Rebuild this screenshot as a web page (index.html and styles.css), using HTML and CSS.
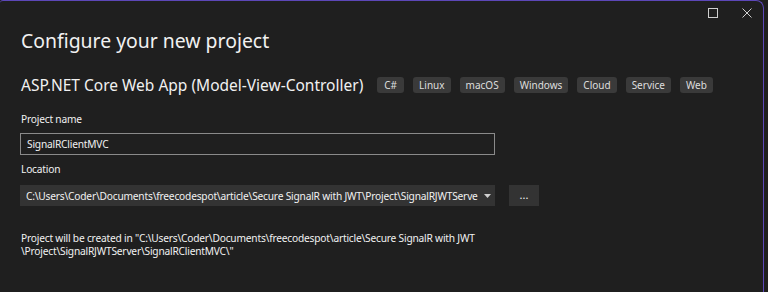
FILE: index.html
```html
<!DOCTYPE html>
<html lang="en">

<head>
    <meta charset="UTF-8">
    <title>Configure your new project</title>
    <link rel="stylesheet" href="styles.css">
</head>

<body>
    <div class="window">
        <div class="title-bar">
            <span class="win-btn">
                <svg width="10" height="10" viewBox="0 0 10 10"><rect x="0.5" y="0.5" width="9" height="9" fill="none" stroke="#cfcfcf" stroke-width="1"/></svg>
            </span>
            <span class="win-btn">
                <svg width="10" height="10" viewBox="0 0 10 10"><path d="M0.5 0.5L9.5 9.5M9.5 0.5L0.5 9.5" stroke="#cfcfcf" stroke-width="1"/></svg>
            </span>
        </div>
        <div class="content">
            <h1 class="page-title">Configure your new project</h1>
            <div class="template-row">
                <h2 class="template-name">ASP.NET Core Web App (Model-View-Controller)</h2>
                <ul class="tags">
                    <li>C#</li>
                    <li>Linux</li>
                    <li>macOS</li>
                    <li>Windows</li>
                    <li>Cloud</li>
                    <li>Service</li>
                    <li>Web</li>
                </ul>
            </div>
            <label class="field-label name-label">Project name</label>
            <div class="text-input">SignalRClientMVC</div>
            <label class="field-label location-label">Location</label>
            <div class="location-row">
                <div class="combo">
                    <span class="combo-text">C:\Users\Coder\Documents\freecodespot\article\Secure SignalR with JWT\Project\SignalRJWTServer</span>
                    <svg class="combo-arrow" width="7" height="4" viewBox="0 0 7 4"><path d="M0 0H7L3.5 4Z" fill="#cfcfcf"/></svg>
                </div>
                <div class="browse-btn">...</div>
            </div>
            <p class="note">Project will be created in "C:\Users\Coder\Documents\freecodespot\article\Secure SignalR with JWT<br>\Project\SignalRJWTServer\SignalRClientMVC\"</p>
        </div>
    </div>
</body>

</html>
```

FILE: styles.css
```css
* {
    margin: 0;
    padding: 0;
    box-sizing: border-box;
}

body {
    background-color: #1f1f1f;
    font-family: "Noto Sans", "Open Sans", sans-serif;
    color: #f1f1f1;
    width: 768px;
    height: 292px;
    overflow: hidden;
}

.window {
    width: 764px;
    height: 300px;
    border-top: 1px solid #5c47b8;
    border-right: 1px solid #5c47b8;
    border-top-right-radius: 8px;
    border-top-left-radius: 3px;
}

.title-bar {
    display: flex;
    justify-content: flex-end;
    gap: 24px;
    padding: 7px 11px 0 0;
    height: 25px;
}

.win-btn {
    display: flex;
    width: 10px;
    height: 10px;
}

.content {
    padding-left: 20px;
}

.page-title {
    font-size: 19.4px;
    font-weight: normal;
    line-height: 29px;
    padding-left: 1px;
}

.template-row {
    display: flex;
    align-items: center;
    margin-top: 19px;
}

.template-name {
    font-size: 15.5px;
    font-weight: normal;
    line-height: 22px;
    padding-left: 1px;
}

.tags {
    display: flex;
    list-style: none;
    gap: 9px;
    margin-left: 14px;
}

.tags li {
    background-color: #3a3a3a;
    border-radius: 3px;
    font-size: 10px;
    line-height: 16px;
    padding: 0 6px;
    color: #dedede;
}

.tags li:first-child {
    padding: 0 7px;
}

.field-label {
    display: block;
    font-size: 10.2px;
    letter-spacing: -0.2px;
    line-height: 14px;
    padding-left: 1px;
}

.name-label {
    margin-top: 16px;
}

.location-label {
    margin-top: 7px;
}

.text-input {
    width: 475px;
    height: 22px;
    border: 1px solid #8a8a8a;
    font-size: 10.2px;
    letter-spacing: -0.2px;
    line-height: 20px;
    padding-left: 6px;
    margin-top: 7px;
}

.location-row {
    display: flex;
    gap: 14px;
    margin-top: 9px;
}

.combo {
    width: 475px;
    height: 21px;
    background-color: #333333;
    display: flex;
    align-items: center;
    padding: 0 4px 0 6px;
}

.combo-text {
    flex: 1;
    font-size: 10.2px;
    letter-spacing: -0.2px;
    white-space: nowrap;
    overflow: hidden;
}

.combo-arrow {
    margin-left: 6px;
}

.browse-btn {
    width: 30px;
    height: 21px;
    background-color: #333333;
    font-size: 11px;
    text-align: center;
    line-height: 20px;
}

.note {
    font-size: 10.2px;
    letter-spacing: -0.2px;
    line-height: 12.5px;
    margin-top: 26px;
    padding-left: 1px;
}
```
